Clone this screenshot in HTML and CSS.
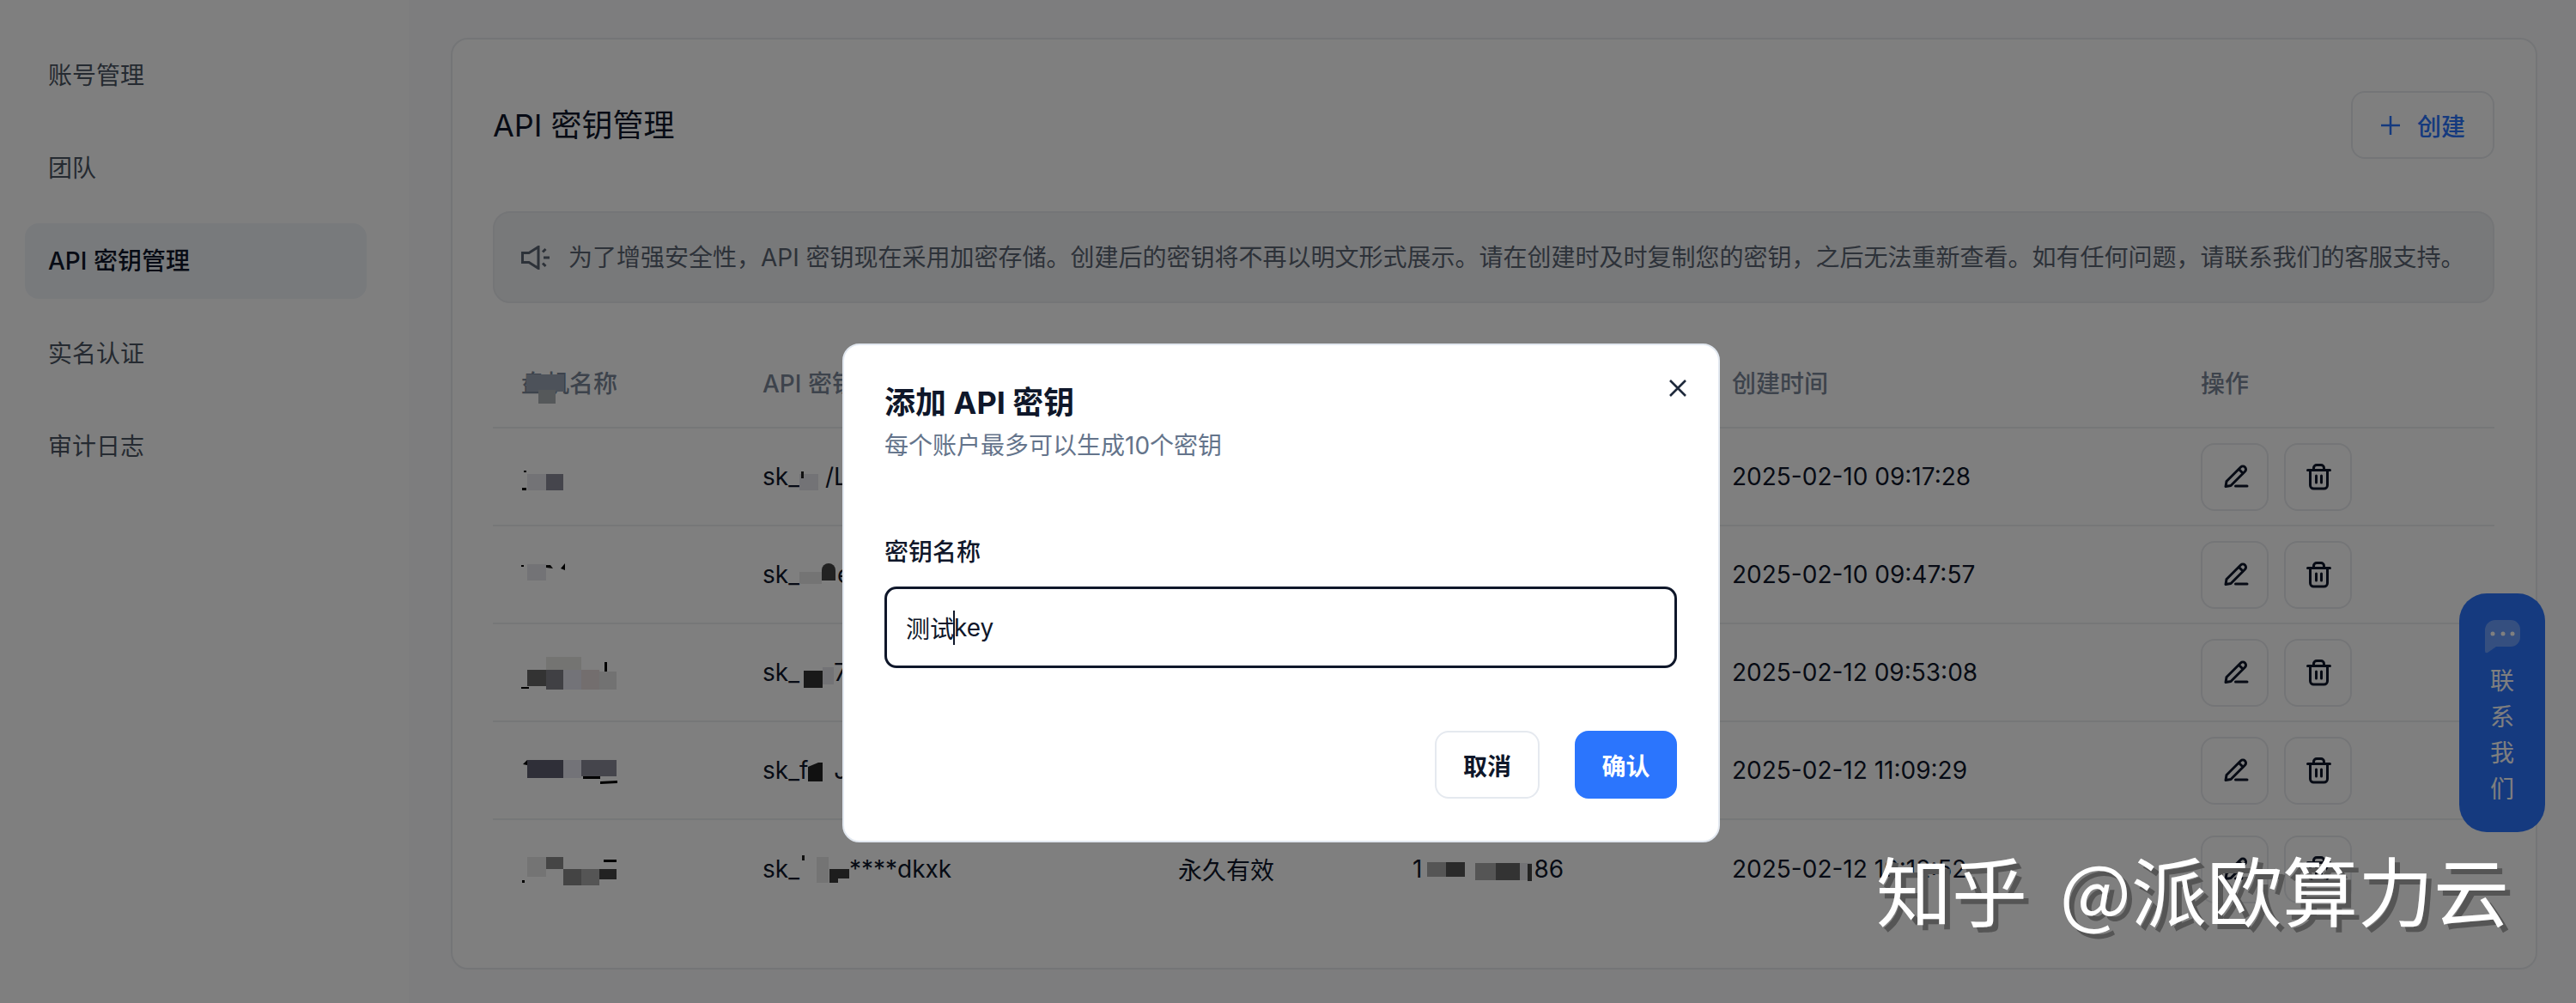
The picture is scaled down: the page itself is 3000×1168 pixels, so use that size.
FILE: index.html
```html
<!DOCTYPE html>
<html lang="zh-CN">
<head>
<meta charset="utf-8">
<title>API 密钥管理</title>
<link rel="stylesheet" href="styles.css">
</head>
<body>
<div class="page">
  <aside class="sidebar">
    <a class="nav-item">账号管理</a>
    <a class="nav-item">团队</a>
    <a class="nav-item active">API 密钥管理</a>
    <a class="nav-item">实名认证</a>
    <a class="nav-item">审计日志</a>
  </aside>
  <main class="main">
    <section class="card">
      <header class="card-head">
        <h1 class="card-title">API 密钥管理</h1>
        <button class="create-btn">
          <svg class="plus" width="24" height="24" viewBox="0 0 24 24"><path d="M12 1V23M1 12H23"/></svg>
          <span>创建</span>
        </button>
      </header>
      <div class="notice">
        <svg class="speaker" width="34" height="28" viewBox="0 0 34 28"><path d="M1.5 8.5H9L20 1.5V26.5L9 19.5H1.5Z"/><path d="M25 7.5L28.5 4M26 14H33M25 20.5L28.5 24"/></svg>
        <span class="notice-text">为了增强安全性，API 密钥现在采用加密存储。创建后的密钥将不再以明文形式展示。请在创建时及时复制您的密钥，之后无法重新查看。如有任何问题，请联系我们的客服支持。</span>
      </div>
      <div class="table">
        <div class="row head">
          <div class="cell name-head">盘机名称
            <svg class="head-patch" width="44" height="36" viewBox="0 0 44 36"><rect x="0" y="0" width="44" height="20" fill="#9aa4b4"/><rect x="14" y="18" width="20" height="16" fill="#aab0b4"/></svg>
          </div>
          <div class="cell">API 密钥</div><div class="cell">有效期</div><div class="cell">创建人</div><div class="cell">创建时间</div><div class="cell">操作</div>
        </div>

        <div class="row">
          <div class="cell"><svg class="mosaic" width="120" height="40" viewBox="0 0 120 40"><rect x="7" y="17" width="22" height="19" fill="#e6e6ec"/><rect x="29" y="17" width="20" height="19" fill="#8a8a98"/><rect x="3" y="13" width="3" height="2" fill="#000"/><rect x="1" y="33" width="5" height="3" fill="#000"/></svg></div>
          <div class="cell">sk_<svg class="key-patch" width="30" height="40" viewBox="0 0 30 40"><rect x="0" y="17" width="22" height="19" fill="#e6e6ec"/><rect x="2" y="14" width="3" height="8" fill="#222"/></svg>/L****dkqs</div>
          <div class="cell">永久有效</div><div class="cell">186****186</div><div class="cell">2025-02-10 09:17:28</div>
          <div class="cell actions"><button class="icon-btn"><svg class="icon" width="32" height="32" viewBox="0 0 32 32"><use href="#pen"/></svg></button><button class="icon-btn"><svg class="icon" width="32" height="32" viewBox="0 0 32 32"><use href="#trash"/></svg></button></div>
        </div>

        <div class="row">
          <div class="cell"><svg class="mosaic" width="120" height="40" viewBox="0 0 120 40"><rect x="7" y="8" width="22" height="19" fill="#e6e6ec"/><rect x="0" y="9" width="3" height="2" fill="#000"/><path d="M29 9h5l3 4-8-1Z" fill="#111"/><path d="M46 13l5-6v8Z" fill="#000"/></svg></div>
          <div class="cell">sk_<svg class="key-patch" width="44" height="40" viewBox="0 0 44 40"><rect x="0" y="17" width="26" height="14" fill="#e8e8e8"/><path d="M26 27V15a8 8 0 0 1 16 0V27Z" fill="#444"/></svg>e****m2t</div>
          <div class="cell">永久有效</div><div class="cell">186****186</div><div class="cell">2025-02-10 09:47:57</div>
          <div class="cell actions"><button class="icon-btn"><svg class="icon" width="32" height="32" viewBox="0 0 32 32"><use href="#pen"/></svg></button><button class="icon-btn"><svg class="icon" width="32" height="32" viewBox="0 0 32 32"><use href="#trash"/></svg></button></div>
        </div>

        <div class="row">
          <div class="cell"><svg class="mosaic" width="120" height="40" viewBox="0 0 120 40"><path d="M29 2H70V17H29Z" fill="#e8e8e4"/><rect x="7" y="17" width="22" height="19" fill="#666"/><rect x="29" y="17" width="20" height="23" fill="#808088"/><rect x="49" y="17" width="21" height="23" fill="#e6e6f0"/><rect x="70" y="17" width="21" height="23" fill="#e6dcdc"/><rect x="91" y="19" width="20" height="21" fill="#e4e4e4"/><rect x="97" y="8" width="3" height="11" fill="#000"/><rect x="0" y="37" width="9" height="2" fill="#000"/></svg></div>
          <div class="cell">sk_<svg class="key-patch" width="40" height="40" viewBox="0 0 40 40"><rect x="5" y="18" width="22" height="20" fill="#333"/><rect x="27" y="14" width="13" height="20" fill="#e6e6ec"/></svg>73****hnb</div>
          <div class="cell">永久有效</div><div class="cell">186****186</div><div class="cell">2025-02-12 09:53:08</div>
          <div class="cell actions"><button class="icon-btn"><svg class="icon" width="32" height="32" viewBox="0 0 32 32"><use href="#pen"/></svg></button><button class="icon-btn"><svg class="icon" width="32" height="32" viewBox="0 0 32 32"><use href="#trash"/></svg></button></div>
        </div>

        <div class="row">
          <div class="cell"><svg class="mosaic" width="120" height="40" viewBox="0 0 120 40"><rect x="7" y="8" width="42" height="21" fill="#5e5e70"/><rect x="49" y="8" width="21" height="21" fill="#e6e6f0"/><rect x="70" y="8" width="41" height="19" fill="#8a8a98"/><path d="M2 13l5-5v6Z" fill="#000"/><path d="M92 33l20-1v3l-20 1ZM72 27h20v3H72Z" fill="#000"/></svg></div>
          <div class="cell">sk_f<svg class="key-patch" width="30" height="40" viewBox="0 0 30 40"><path d="M0 16l12-5h5v22H0Z" fill="#222"/></svg>JV****x8p</div>
          <div class="cell">永久有效</div><div class="cell">186****186</div><div class="cell">2025-02-12 11:09:29</div>
          <div class="cell actions"><button class="icon-btn"><svg class="icon" width="32" height="32" viewBox="0 0 32 32"><use href="#pen"/></svg></button><button class="icon-btn"><svg class="icon" width="32" height="32" viewBox="0 0 32 32"><use href="#trash"/></svg></button></div>
        </div>

        <div class="row last">
          <div class="cell"><svg class="mosaic" width="120" height="40" viewBox="0 0 120 40"><rect x="7" y="6" width="22" height="23" fill="#e8e8e8"/><rect x="29" y="6" width="20" height="14" fill="#8a8a8a"/><rect x="49" y="20" width="21" height="19" fill="#888"/><rect x="70" y="20" width="21" height="19" fill="#aaa"/><path d="M91 20h20v12H91Z" fill="#444"/><rect x="1" y="33" width="3" height="3" fill="#000"/><rect x="96" y="9" width="15" height="3" fill="#000"/></svg></div>
          <div class="cell key-last">sk_<svg class="key-patch" width="58" height="40" viewBox="0 0 58 40"><rect x="3" y="4" width="3" height="6" fill="#222"/><rect x="20" y="6" width="14" height="30" fill="#e8e8e8"/><path d="M35 20H58V31H45V36H35Z" fill="#3a3a3a"/></svg>****dkxk</div>
          <div class="cell">永久有效</div>
          <div class="cell">1<svg class="key-patch" width="130" height="40" viewBox="0 0 130 40"><rect x="6" y="12" width="24" height="17" fill="#aaaaaa"/><rect x="28" y="12" width="22" height="17" fill="#555"/><rect x="62" y="13" width="26" height="20" fill="#aaaaaa"/><rect x="86" y="13" width="28" height="20" fill="#666"/><rect x="114" y="13" width="14" height="20" fill="#e6e6ec"/><rect x="123" y="14" width="5" height="20" fill="#444"/></svg>86</div>
          <div class="cell">2025-02-12 10:12:52</div>
          <div class="cell actions"><button class="icon-btn"><svg class="icon" width="32" height="32" viewBox="0 0 32 32"><use href="#pen"/></svg></button><button class="icon-btn"><svg class="icon" width="32" height="32" viewBox="0 0 32 32"><use href="#trash"/></svg></button></div>
        </div>
      </div>
    </section>
  </main>
</div>

<aside class="contact">
  <svg width="41" height="39" viewBox="0 0 41 39"><path class="bubble" d="M12 0H30A11 11 0 0 1 41 11V20A11 11 0 0 1 30 31H13L3 38Q0 39 0 36V12A12 12 0 0 1 12 0Z"/><circle class="dot" cx="9" cy="16" r="2.5"/><circle class="dot" cx="21" cy="16" r="2.5"/><circle class="dot" cx="32" cy="16" r="2.5"/></svg>
  <span class="contact-text">联</span><span class="contact-text">系</span><span class="contact-text">我</span><span class="contact-text">们</span>
</aside>

<div class="overlay">
  <div class="modal">
    <button class="close"><svg width="20" height="20" viewBox="0 0 20 20"><path d="M1 1L19 19M19 1L1 19"/></svg></button>
    <h2 class="modal-title">添加 API 密钥</h2>
    <p class="modal-sub">每个账户最多可以生成10个密钥</p>
    <label class="field-label">密钥名称</label>
    <div class="input"><span>测试</span><span class="caret"></span><span>key</span></div>
    <div class="modal-foot">
      <button class="btn">取消</button>
      <button class="btn primary">确认</button>
    </div>
  </div>
</div>

<div class="watermark">知乎 @派欧算力云</div>

<svg class="defs" width="0" height="0">
  <symbol id="pen" viewBox="0 0 32 32"><path d="M5 27.5L6 21.5L22.5 5A3.4 3.4 0 0 1 27.5 10L11 26.5Z"/><path d="M20.5 7.5L25 12M16.5 27H30"/></symbol>
  <symbol id="trash" viewBox="0 0 32 32"><path d="M3.5 8.5H29.5M10.5 8V6A3.5 3.5 0 0 1 14 2.5H19A3.5 3.5 0 0 1 22.5 6V8M6.5 8.5V26A4 4 0 0 0 10.5 30H22.5A4 4 0 0 0 26.5 26V8.5M13.5 15V23M19.5 15V23"/></symbol>
</svg>
</body>
</html>
```

FILE: styles.css
```css
* { box-sizing: border-box; }
html, body { margin: 0; padding: 0; }
body {
  width: 3000px;
  height: 1168px;
  overflow: hidden;
  position: relative;
  font-family: Inter, "Noto Sans CJK SC", sans-serif;
  font-size: 28px;
  color: #0f172a;
  background: #fafbfc;
}
.page { display: flex; height: 1168px; }
.sidebar {
  width: 476px;
  flex: none;
  background: #fff;
  padding: 44px 49px 0 29px;
  display: flex;
  flex-direction: column;
  gap: 20px;
}
.nav-item {
  height: 88px;
  display: flex;
  align-items: center;
  padding: 0 0 4px 27px;
  border-radius: 16px;
  color: #4b5563;
}
.nav-item.active { background: #f1f5f9; color: #0f172a; font-weight: 500; }
.main { flex: 1; padding: 44px 45px 39px 49px; }
.card {
  height: 1085px;
  background: #fff;
  border: 2px solid #e9ebee;
  border-radius: 20px;
  padding: 60px 48px 0 47px;
  overflow: hidden;
}
.card-head { display: flex; align-items: center; justify-content: space-between; height: 79px; }
.card-title { margin: 0; padding-bottom: 5px; font-size: 36px; font-weight: 400; color: #0f172a; }
button { font-family: inherit; font-size: 28px; background: #fff; cursor: pointer; }
.create-btn {
  width: 167px;
  height: 79px;
  border: 2px solid #e8ebef;
  border-radius: 16px;
  display: flex;
  align-items: center;
  justify-content: center;
  gap: 19px;
  padding: 0;
  color: #2b75fd;
  font-weight: 500;
}
.plus path { stroke: #2b75fd; stroke-width: 2.5; fill: none; }
.notice {
  margin-top: 61px;
  height: 107px;
  display: flex;
  align-items: center;
  gap: 21px;
  padding-left: 31px;
  background: #f1f3f5;
  border: 2px solid #e9ebee;
  border-radius: 20px;
  color: #5b6472;
  white-space: nowrap;
}
.notice-text { padding-bottom: 3px; }
.speaker { flex: none; fill: none; stroke: #5b6472; stroke-width: 3; }
.table { margin-top: 39px; }
.row {
  display: grid;
  grid-template-columns: 281px 484px 273px 372px 546px 1fr;
  padding-left: 33px;
  height: 114px;
  align-items: center;
  border-bottom: 2px solid #edeef0;
  color: #0f172a;
  white-space: nowrap;
}
.row.head { height: 107px; color: #7b8798; font-weight: 500; }
.row.last { border-bottom: 0; }
.cell { display: flex; align-items: center; min-width: 0; }
.name-head { position: relative; }
.head-patch { position: absolute; left: 6px; top: 11px; }
.mosaic, .key-patch { flex: none; }
.actions { gap: 18px; }
.icon-btn {
  width: 79px;
  height: 79px;
  border: 2px solid #e9ebee;
  border-radius: 16px;
  padding: 0;
  display: flex;
  align-items: center;
  justify-content: center;
}
.icon { fill: none; stroke: #0f172a; stroke-width: 3; stroke-linecap: round; stroke-linejoin: round; }
.defs { position: absolute; }
.contact {
  position: absolute;
  left: 2864px;
  top: 691px;
  width: 100px;
  height: 278px;
  border-radius: 32px;
  background: #2b75ff;
  color: #fff;
  display: flex;
  flex-direction: column;
  align-items: center;
  padding-top: 31px;
  line-height: 42px;
}
.contact svg { margin-bottom: 11px; }
.bubble { fill: rgba(255, 255, 255, .3); }
.dot { fill: #fff; }
.overlay {
  position: absolute;
  inset: 0;
  background: rgba(0, 0, 0, .5);
  padding: 400px 0 0 981px;
}
.modal {
  position: relative;
  width: 1022px;
  height: 581px;
  background: #fff;
  border: 2px solid #e2e8f0;
  border-radius: 20px;
  padding: 44px 48px 0 47px;
}
.close {
  position: absolute;
  right: 35px;
  top: 38px;
  width: 24px;
  height: 24px;
  padding: 2px;
  border: 0;
  background: none;
  display: flex;
}
.close path { stroke: #1e293b; stroke-width: 2.6; fill: none; }
.modal-title { margin: 0; font-size: 36px; line-height: 46px; font-weight: 700; color: #0f172a; }
.modal-sub { margin: 7px 0 0; line-height: 40px; color: #64748b; }
.field-label { display: block; margin-top: 84px; line-height: 40px; font-weight: 500; color: #0f172a; }
.input {
  margin-top: 20px;
  height: 95px;
  border: 3px solid #0f172a;
  border-radius: 14px;
  padding-left: 22px;
  display: flex;
  align-items: center;
  color: #0f172a;
}
.caret { width: 2px; height: 40px; margin: 0 -1px; background: #0f172a; }
.modal-foot { margin-top: 73px; display: flex; justify-content: flex-end; gap: 41px; }
.btn {
  height: 79px;
  width: 122px;
  border: 2px solid #e5e9ef;
  border-radius: 16px;
  padding: 0;
  font-weight: 700;
  color: #0f172a;
}
.btn.primary { width: 119px; background: #2b75fd; border-color: #2b75fd; color: #fff; }
.watermark {
  position: absolute;
  left: 2185px;
  top: 974px;
  font-family: "Noto Sans CJK SC", sans-serif;
  font-size: 88px;
  line-height: 120px;
  font-weight: 400;
  word-spacing: 18px;
  color: #fff;
  text-shadow: 6px 6px 0 #555;
  white-space: nowrap;
}
```
